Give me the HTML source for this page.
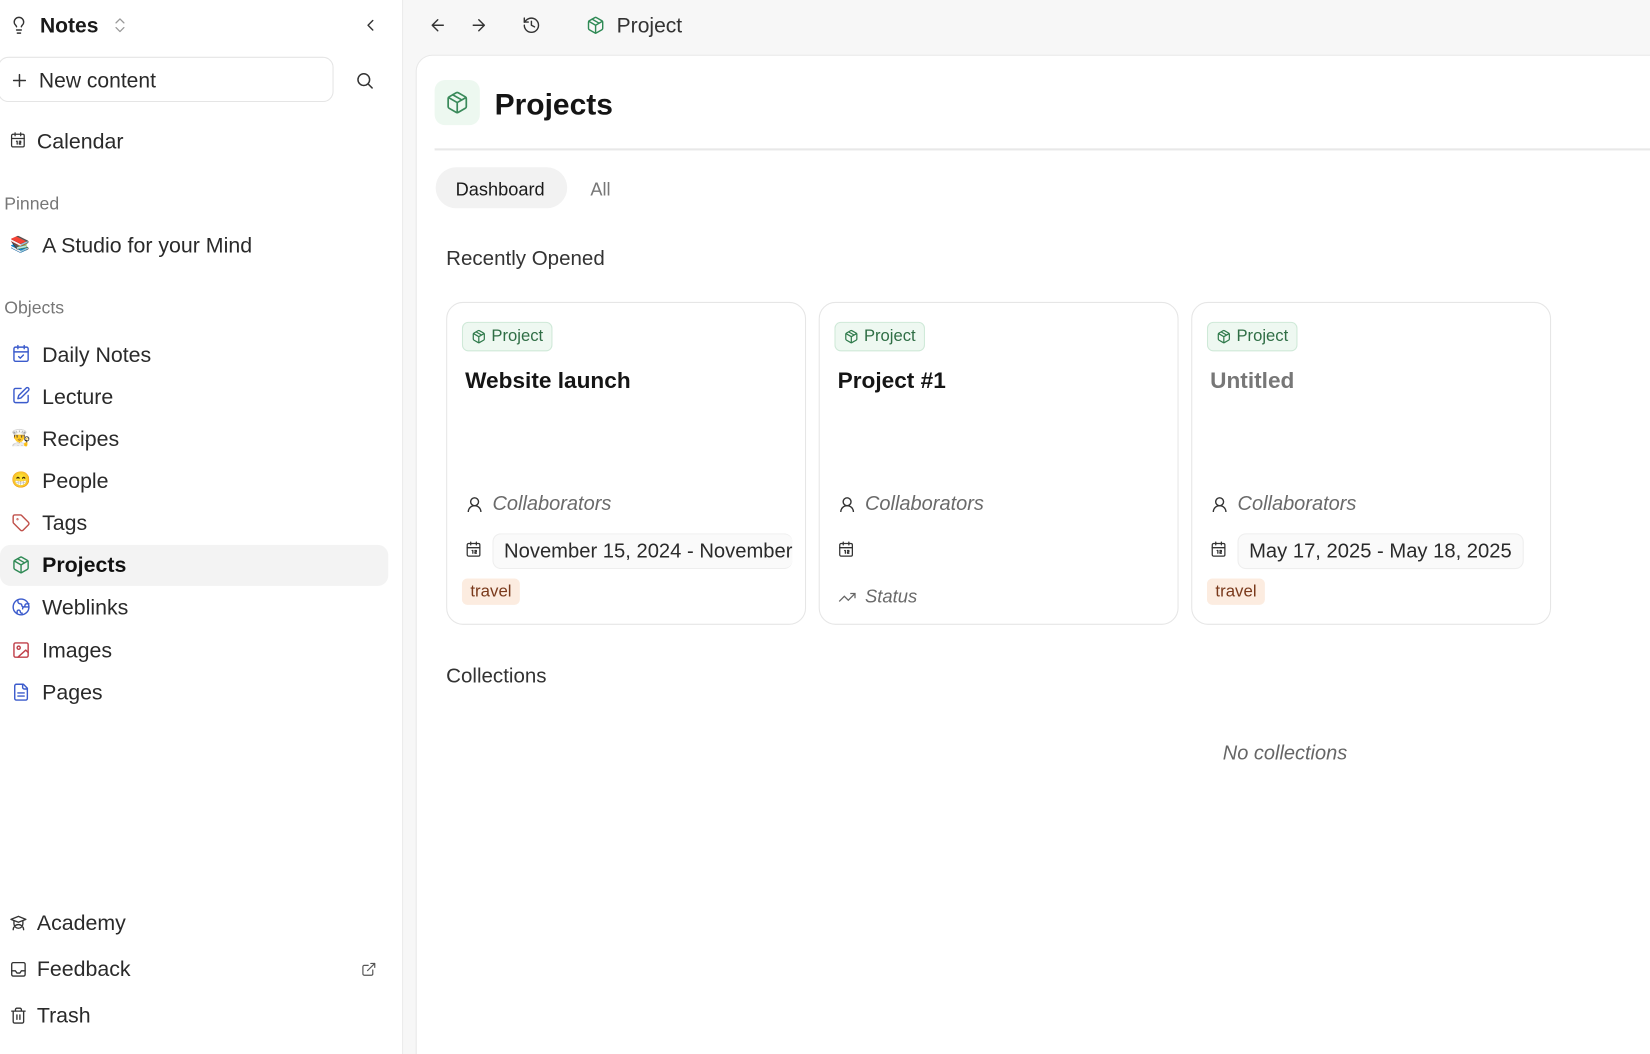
<!DOCTYPE html>
<html><head><meta charset="utf-8"><style>
*{box-sizing:border-box;margin:0;padding:0}
html,body{width:1650px;height:1054px;overflow:hidden;background:#fff;font-family:"Liberation Sans","Noto Sans CJK SC",sans-serif;color:#222}
#w{position:absolute;left:0;top:0;width:1568px;height:1002px;overflow:hidden;transform:scale(1.05230,1.05190);transform-origin:0 0}
.a{position:absolute}
svg{display:block}
.t{transform:translateY(2px)}
.ic{position:absolute;width:18px;height:18px;fill:none;stroke:#333;stroke-width:1.8;stroke-linecap:round;stroke-linejoin:round}
.si{position:absolute;left:0;font-size:20.3px;color:#2a2a2a;white-space:nowrap;transform:translateY(2px)}
.sec{position:absolute;left:4px;font-size:16.8px;color:#777;transform:translateY(2px)}
.card{position:absolute;top:287px;width:342px;height:307px;border:1.5px solid #e6e6e6;border-radius:16px;background:#fff}
.badge{position:absolute;left:14px;top:18px;height:28px;padding:0 8px 0 8px;border:1px solid #cfe9d8;background:#eef8f1;border-radius:6px;color:#2f6e45;font-size:15.8px;line-height:26px;display:flex;align-items:center;gap:5px}
.ct{position:absolute;left:17px;top:62px;font-size:21.5px;font-weight:bold;color:#151515}
.prow{position:absolute;left:17px;font-size:19px;font-style:italic;color:#6a6a6a;display:flex;align-items:center;gap:8px}
.date{position:absolute;left:43px;top:219px;height:34px;border:1px solid #eee;background:#fafafa;border-radius:8px;font-size:19.2px;color:#2a2a2a;line-height:33px;padding:0 10px;white-space:nowrap;overflow:hidden}
.tag{position:absolute;left:14px;top:262px;height:25px;padding:0 8px;background:#fcece0;border-radius:5px;color:#7a3a1c;font-size:16px;line-height:26px}
</style></head><body><div id="w">
<!-- sidebar -->
<svg class="ic" style="left:9px;top:15px" viewBox="0 0 24 24"><path d="M15 14c.2-1 .7-1.7 1.5-2.5 1-.9 1.5-2.2 1.5-3.5A6 6 0 0 0 6 8c0 1 .2 2.2 1.5 3.5.7.7 1.3 1.5 1.5 2.5"/><path d="M9 18h6M10 22h4"/></svg>
<div class="a t" style="left:38px;top:12px;font-size:20px;font-weight:bold;color:#1a1a1a">Notes</div>
<svg class="ic" style="left:105px;top:15px;stroke:#999;stroke-width:1.6" viewBox="0 0 24 24"><path d="m7 15 5 5 5-5M7 9l5-5 5 5"/></svg>
<svg class="ic" style="left:343px;top:15px" viewBox="0 0 24 24"><path d="m15 18-6-6 6-6"/></svg>
<div class="a" style="left:-2px;top:54px;width:319px;height:43px;border:1.5px solid #e5e5e5;border-radius:10px"></div>
<svg class="ic" style="left:9px;top:67px;width:19px;height:19px" viewBox="0 0 24 24"><path d="M5 12h14M12 5v14"/></svg>
<div class="a t" style="left:37px;top:64px;font-size:20px;color:#2a2a2a">New content</div>
<svg class="ic" style="left:337px;top:67px;width:19px;height:19px" viewBox="0 0 24 24"><circle cx="11" cy="11" r="7"/><path d="m21 21-4.3-4.3"/></svg>
<svg class="ic" style="left:9px;top:125px;width:16px;height:16px" viewBox="0 0 24 24"><rect x="3" y="4" width="18" height="18" rx="2"/><path d="M16 2v4M8 2v4M3 10h18M10 14h1v4M14 14h2v2h-2v2h2"/></svg>
<div class="si" style="left:35px;top:122px">Calendar</div>
<div class="sec" style="top:182px">Pinned</div>
<div class="a" style="left:9px;top:223px;width:20px;height:20px;font-size:15px;line-height:20px;text-align:center">📚</div>
<div class="si" style="left:40px;top:221px">A Studio for your Mind</div>
<div class="sec" style="top:281px">Objects</div>
<div class="a" style="left:0;top:518px;width:369px;height:39px;background:#f3f3f3;border-radius:10px"></div>
<svg class="ic" style="left:11px;top:327px;stroke:#3b5bcc" viewBox="0 0 24 24"><rect x="3" y="4" width="18" height="18" rx="2"/><path d="M16 2v4M8 2v4M3 10h18M9 16l2 2 4-4"/></svg>
<div class="si" style="left:40px;top:325px">Daily Notes</div>
<svg class="ic" style="left:11px;top:367px;stroke:#3b5bcc" viewBox="0 0 24 24"><path d="M12 3H5a2 2 0 0 0-2 2v14a2 2 0 0 0 2 2h14a2 2 0 0 0 2-2v-7"/><path d="M18.4 2.6a2.1 2.1 0 0 1 3 3L12 15l-4 1 1-4z"/></svg>
<div class="si" style="left:40px;top:365px">Lecture</div>
<div class="a" style="left:10px;top:407px;width:20px;font-size:15px;line-height:20px;text-align:center">👨‍🍳</div>
<div class="si" style="left:40px;top:405px">Recipes</div>
<div class="a" style="left:10px;top:447px;width:20px;font-size:15px;line-height:20px;text-align:center">😁</div>
<div class="si" style="left:40px;top:445px">People</div>
<svg class="ic" style="left:11px;top:488px;stroke:#c0504a" viewBox="0 0 24 24"><path d="M12.6 2.6A2 2 0 0 0 11.2 2H4a2 2 0 0 0-2 2v7.2a2 2 0 0 0 .6 1.4l8.7 8.7a2.4 2.4 0 0 0 3.4 0l6.6-6.6a2.4 2.4 0 0 0 0-3.4z"/><circle cx="7.5" cy="7.5" r=".5"/></svg>
<div class="si" style="left:40px;top:485px">Tags</div>
<svg class="ic" style="left:11px;top:528px;stroke:#2f8a55" viewBox="0 0 24 24"><path d="M11 21.7a2 2 0 0 0 2 0l7-4A2 2 0 0 0 21 16V8a2 2 0 0 0-1-1.7l-7-4a2 2 0 0 0-2 0l-7 4A2 2 0 0 0 3 8v8a2 2 0 0 0 1 1.7z"/><path d="M12 22V12M3.3 7 12 12l8.7-5M7.5 4.3l9 5.1"/></svg>
<div class="si" style="left:40px;top:525px;font-weight:bold;color:#111">Projects</div>
<svg class="ic" style="left:11px;top:568px;stroke:#3b5bcc" viewBox="0 0 24 24"><circle cx="12" cy="12" r="10"/><path d="M21.5 12H16a2 2 0 0 0-2 2v.5M8 3.3V5a3 3 0 0 0 3 3 2 2 0 0 1 2 2c0 1.1.9 2 2 2a2 2 0 0 0 2-2c0-1.1.9-2 2-2h3M7 20.7V18a2 2 0 0 1 2-2 2 2 0 0 1 2 2 2 2 0 0 0 2 2h.5"/></svg>
<div class="si" style="left:40px;top:565px">Weblinks</div>
<svg class="ic" style="left:11px;top:609px;stroke:#c0404a" viewBox="0 0 24 24"><rect x="3" y="3" width="18" height="18" rx="2"/><circle cx="9" cy="9" r="2"/><path d="m21 15-3-3-10 9"/></svg>
<div class="si" style="left:40px;top:606px">Images</div>
<svg class="ic" style="left:11px;top:649px;stroke:#3b5bcc" viewBox="0 0 24 24"><path d="M15 2H6a2 2 0 0 0-2 2v16a2 2 0 0 0 2 2h12a2 2 0 0 0 2-2V7z"/><path d="M14 2v4a2 2 0 0 0 2 2h4M16 13H8M16 17H8"/></svg>
<div class="si" style="left:40px;top:646px">Pages</div>
<svg class="ic" style="left:9px;top:869px;width:17px;height:17px" viewBox="0 0 24 24"><path d="M22 7 12 3 2 7l10 4z"/><path d="M6 9v4a6 6 0 0 0 12 0V9M5 21a7 7 0 0 1 14 0"/></svg>
<div class="si" style="left:35px;top:865px">Academy</div>
<svg class="ic" style="left:9px;top:913px;width:17px;height:17px" viewBox="0 0 24 24"><rect x="3" y="3" width="18" height="18" rx="2"/><path d="M3 14h5l2 3h4l2-3h5"/></svg>
<div class="si" style="left:35px;top:909px">Feedback</div>
<svg class="ic" style="left:343px;top:914px;width:15px;height:15px;stroke:#555" viewBox="0 0 24 24"><path d="M15 3h6v6M10 14 21 3M18 13v6a2 2 0 0 1-2 2H5a2 2 0 0 1-2-2V8a2 2 0 0 1 2-2h6"/></svg>
<svg class="ic" style="left:9px;top:957px;width:17px;height:17px" viewBox="0 0 24 24"><path d="M3 6h18M19 6v14a2 2 0 0 1-2 2H7a2 2 0 0 1-2-2V6M8 6V4a2 2 0 0 1 2-2h4a2 2 0 0 1 2 2v2M10 11v6M14 11v6"/></svg>
<div class="si" style="left:35px;top:953px">Trash</div>

<!-- main -->
<div class="a" style="left:382px;top:0;width:1186px;height:1002px;background:#f7f7f7;border-left:1px solid #ececec"></div>
<svg class="ic" style="left:407px;top:15px" viewBox="0 0 24 24"><path d="m12 19-7-7 7-7M19 12H5"/></svg>
<svg class="ic" style="left:446px;top:15px" viewBox="0 0 24 24"><path d="M5 12h14M12 5l7 7-7 7"/></svg>
<svg class="ic" style="left:496px;top:15px" viewBox="0 0 24 24"><path d="M3 12a9 9 0 1 0 9-9 9.8 9.8 0 0 0-6.7 2.7L3 8"/><path d="M3 3v5h5M12 7v5l4 2"/></svg>
<svg class="ic" style="left:557px;top:15px;stroke:#2f8a55" viewBox="0 0 24 24"><path d="M11 21.7a2 2 0 0 0 2 0l7-4A2 2 0 0 0 21 16V8a2 2 0 0 0-1-1.7l-7-4a2 2 0 0 0-2 0l-7 4A2 2 0 0 0 3 8v8a2 2 0 0 0 1 1.7z"/><path d="M12 22V12M3.3 7 12 12l8.7-5M7.5 4.3l9 5.1"/></svg>
<div class="a t" style="left:586px;top:12px;font-size:20px;color:#333">Project</div>
<div class="a" style="left:395px;top:52px;width:1200px;height:960px;background:#fff;border:1.5px solid #e8e8e8;border-radius:16px 0 0 0"></div>
<div class="a" style="left:413px;top:76px;width:43px;height:43px;background:#edf8f0;border-radius:10px"></div>
<svg class="ic" style="left:423px;top:86px;width:23px;height:23px;stroke:#3a8a5a;stroke-width:1.7" viewBox="0 0 24 24"><path d="M11 21.7a2 2 0 0 0 2 0l7-4A2 2 0 0 0 21 16V8a2 2 0 0 0-1-1.7l-7-4a2 2 0 0 0-2 0l-7 4A2 2 0 0 0 3 8v8a2 2 0 0 0 1 1.7z"/><path d="M12 22V12M3.3 7 12 12l8.7-5M7.5 4.3l9 5.1"/></svg>
<div class="a t" style="left:470px;top:82px;font-size:28.5px;font-weight:bold;color:#151515">Projects</div>
<div class="a" style="left:413px;top:141px;width:1155px;height:1.5px;background:#e8e8e8"></div>
<div class="a" style="left:414px;top:159px;width:125px;height:39px;background:#f2f2f2;border-radius:20px"></div>
<div class="a t" style="left:433px;top:168px;font-size:17.3px;color:#1a1a1a">Dashboard</div>
<div class="a t" style="left:561px;top:168px;font-size:17.3px;color:#777">All</div>
<div class="a t" style="left:424px;top:233px;font-size:19.5px;color:#333">Recently Opened</div>

<div class="card" style="left:424px">
<div class="badge"><svg style="width:14px;height:14px;fill:none;stroke:#2f7a4b;stroke-width:2" viewBox="0 0 24 24"><path d="M11 21.7a2 2 0 0 0 2 0l7-4A2 2 0 0 0 21 16V8a2 2 0 0 0-1-1.7l-7-4a2 2 0 0 0-2 0l-7 4A2 2 0 0 0 3 8v8a2 2 0 0 0 1 1.7z"/><path d="M12 22V12M3.3 7 12 12l8.7-5M7.5 4.3l9 5.1"/></svg>Project</div>
<div class="ct">Website launch</div>
<div class="prow" style="top:181px"><svg style="width:18px;height:18px;fill:none;stroke:#333;stroke-width:1.8" viewBox="0 0 24 24"><circle cx="12" cy="8" r="5"/><path d="M20 21a8 8 0 0 0-16 0"/></svg>Collaborators</div>
<svg class="ic" style="left:17px;top:226px;width:16px;height:16px" viewBox="0 0 24 24"><rect x="3" y="4" width="18" height="18" rx="2"/><path d="M16 2v4M8 2v4M3 10h18M10 14h1v4M14 14h2v2h-2v2h2"/></svg>
<div class="date" style="width:285px;border-right:none">November 15, 2024 - November 20, 2024</div>
<div class="tag">travel</div>
</div>

<div class="card" style="left:778px">
<div class="badge"><svg style="width:14px;height:14px;fill:none;stroke:#2f7a4b;stroke-width:2" viewBox="0 0 24 24"><path d="M11 21.7a2 2 0 0 0 2 0l7-4A2 2 0 0 0 21 16V8a2 2 0 0 0-1-1.7l-7-4a2 2 0 0 0-2 0l-7 4A2 2 0 0 0 3 8v8a2 2 0 0 0 1 1.7z"/><path d="M12 22V12M3.3 7 12 12l8.7-5M7.5 4.3l9 5.1"/></svg>Project</div>
<div class="ct">Project #1</div>
<div class="prow" style="top:181px"><svg style="width:18px;height:18px;fill:none;stroke:#333;stroke-width:1.8" viewBox="0 0 24 24"><circle cx="12" cy="8" r="5"/><path d="M20 21a8 8 0 0 0-16 0"/></svg>Collaborators</div>
<svg class="ic" style="left:17px;top:226px;width:16px;height:16px" viewBox="0 0 24 24"><rect x="3" y="4" width="18" height="18" rx="2"/><path d="M16 2v4M8 2v4M3 10h18M10 14h1v4M14 14h2v2h-2v2h2"/></svg>
<div class="prow" style="top:269px;font-size:17.5px"><svg style="width:18px;height:18px;fill:none;stroke:#666;stroke-width:1.6" viewBox="0 0 24 24"><path d="M22 7l-8.5 8.5-5-5L2 17M16 7h6v6"/></svg>Status</div>
</div>

<div class="card" style="left:1132px">
<div class="badge"><svg style="width:14px;height:14px;fill:none;stroke:#2f7a4b;stroke-width:2" viewBox="0 0 24 24"><path d="M11 21.7a2 2 0 0 0 2 0l7-4A2 2 0 0 0 21 16V8a2 2 0 0 0-1-1.7l-7-4a2 2 0 0 0-2 0l-7 4A2 2 0 0 0 3 8v8a2 2 0 0 0 1 1.7z"/><path d="M12 22V12M3.3 7 12 12l8.7-5M7.5 4.3l9 5.1"/></svg>Project</div>
<div class="ct" style="color:#777">Untitled</div>
<div class="prow" style="top:181px"><svg style="width:18px;height:18px;fill:none;stroke:#333;stroke-width:1.8" viewBox="0 0 24 24"><circle cx="12" cy="8" r="5"/><path d="M20 21a8 8 0 0 0-16 0"/></svg>Collaborators</div>
<svg class="ic" style="left:17px;top:226px;width:16px;height:16px" viewBox="0 0 24 24"><rect x="3" y="4" width="18" height="18" rx="2"/><path d="M16 2v4M8 2v4M3 10h18M10 14h1v4M14 14h2v2h-2v2h2"/></svg>
<div class="date">May 17, 2025 - May 18, 2025</div>
<div class="tag">travel</div>
</div>

<div class="a t" style="left:424px;top:630px;font-size:19.5px;color:#333">Collections</div>
<div class="a t" style="left:1162px;top:704px;font-size:19px;font-style:italic;color:#666">No collections</div>
</div></body></html>
